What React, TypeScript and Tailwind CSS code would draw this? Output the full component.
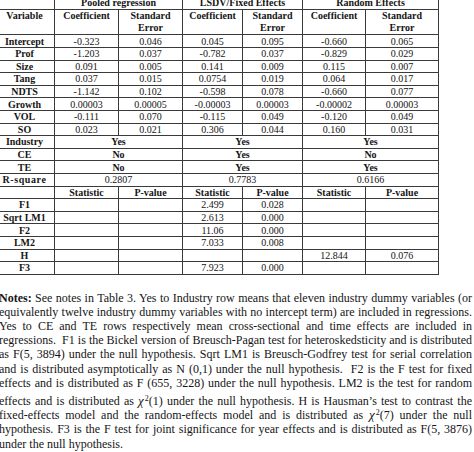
import React from "react";

type Row = [string, string, string, string, string, string, string];

const COEFS: Row[] = [
  ["Intercept", "-0.323", "0.046", "0.045", "0.095", "-0.660", "0.065"],
  ["Prof", "-1.203", "0.037", "-0.782", "0.037", "-0.829", "0.029"],
  ["Size", "0.091", "0.005", "0.141", "0.009", "0.115", "0.007"],
  ["Tang", "0.037", "0.015", "0.0754", "0.019", "0.064", "0.017"],
  ["NDTS", "-1.142", "0.102", "-0.598", "0.078", "-0.660", "0.077"],
  ["Growth", "0.00003", "0.00005", "-0.00003", "0.00003", "-0.00002", "0.00003"],
  ["VOL", "-0.111", "0.070", "-0.115", "0.049", "-0.120", "0.049"],
  ["SO", "0.023", "0.021", "0.306", "0.044", "0.160", "0.031"],
];

const DUMMIES: [string, string, string, string][] = [
  ["Industry", "Yes", "Yes", "Yes"],
  ["CE", "No", "Yes", "No"],
  ["TE", "No", "Yes", "Yes"],
];

const TESTS: Row[] = [
  ["F1", "", "", "2.499", "0.028", "", ""],
  ["Sqrt LM1", "", "", "2.613", "0.000", "", ""],
  ["F2", "", "", "11.06", "0.000", "", ""],
  ["LM2", "", "", "7.033", "0.008", "", ""],
  ["H", "", "", "", "", "12.844", "0.076"],
  ["F3", "", "", "7.923", "0.000", "", ""],
];

const td = "border border-[#3a3a3a] p-0 text-center align-middle h-[12.6px] leading-[11px]";
const hd = `${td} font-bold`;

const Chi = ({ n }: { n: string }) => (
  <span className="whitespace-nowrap">
    <i className="text-[13px]">χ</i>
    <sup className="ml-[1px] text-[8px] leading-none">2</sup>({n})
  </span>
);

// justified line of the notes paragraph
const Line = ({ children, last }: { children: React.ReactNode; last?: boolean }) => (
  <div className={`h-[14.2px] whitespace-nowrap ${last ? "text-left" : "text-justify [text-align-last:justify]"}`}>
    {children}
  </div>
);

export default function App() {
  return (
    <div className="w-[474px] h-[452px] overflow-hidden bg-white text-[#151515] font-['Liberation_Serif',serif]">
      <table className="-ml-[6px] -mt-[4px] border-collapse table-fixed text-[10px]">
        <colgroup>
          <col className="w-[60px]" />
          <col className="w-[64px]" />
          <col className="w-[64px]" />
          <col className="w-[60px]" />
          <col className="w-[60px]" />
          <col className="w-[63px]" />
          <col className="w-[73px]" />
        </colgroup>
        <tbody>
          <tr>
            <td className={td}></td>
            <td colSpan={2} className={hd}>Pooled regression</td>
            <td colSpan={2} className={hd}>LSDV/Fixed Effects</td>
            <td colSpan={2} className={hd}>Random Effects</td>
          </tr>
          <tr>
            <td className={`${hd} !align-top h-[25px] leading-[12.4px]`}>Variable</td>
            {[0, 1, 2].map((i) => (
              <React.Fragment key={i}>
                <td className={`${hd} !align-top h-[25px] leading-[12.4px]`}>Coefficient</td>
                <td className={`${hd} !align-top h-[25px] leading-[12.4px]`}>
                  Standard
                  <br />
                  Error
                </td>
              </React.Fragment>
            ))}
          </tr>
          {COEFS.map((r) => (
            <tr key={r[0]}>
              <td className={hd}>{r[0]}</td>
              {r.slice(1).map((v, i) => (
                <td key={i} className={td}>{v}</td>
              ))}
            </tr>
          ))}
          {DUMMIES.map((r) => (
            <tr key={r[0]}>
              <td className={hd}>{r[0]}</td>
              <td colSpan={2} className={hd}>{r[1]}</td>
              <td colSpan={2} className={hd}>{r[2]}</td>
              <td colSpan={2} className={hd}>{r[3]}</td>
            </tr>
          ))}
          <tr>
            <td className={`${hd} tracking-[0.6px]`}>R-square</td>
            <td colSpan={2} className={td}>0.2807</td>
            <td colSpan={2} className={td}>0.7783</td>
            <td colSpan={2} className={td}>0.6166</td>
          </tr>
          <tr>
            <td className={td}></td>
            {[0, 1, 2].map((i) => (
              <React.Fragment key={i}>
                <td className={hd}>Statistic</td>
                <td className={hd}>P-value</td>
              </React.Fragment>
            ))}
          </tr>
          {TESTS.map((r) => (
            <tr key={r[0]}>
              <td className={hd}>{r[0]}</td>
              {r.slice(1).map((v, i) => (
                <td key={i} className={td}>{v}</td>
              ))}
            </tr>
          ))}
        </tbody>
      </table>

      <div className="mt-[16px] -ml-[1px] w-[473px] text-[12px] leading-[14.2px]">
        <Line><b>Notes:</b> See notes in Table 3. Yes to Industry row means that eleven industry dummy variables (or</Line>
        <Line>equivalently twelve industry dummy variables with no intercept term) are included in regressions.</Line>
        <Line>Yes to CE and TE rows respectively mean cross-sectional and time effects are included in</Line>
        <Line>regressions. &nbsp;F1 is the Bickel version of Breusch-Pagan test for heteroskedsticity and is distributed</Line>
        <Line>as F(5, 3894) under the null hypothesis. Sqrt LM1 is Breusch-Godfrey test for serial correlation</Line>
        <Line>and is distributed asymptotically as N (0,1) under the null hypothesis. &nbsp;F2 is the F test for fixed</Line>
        <Line>effects and is distributed as F (655, 3228) under the null hypothesis. LM2 is the test for random</Line>
        <div className="h-[4px]" />
        <Line>effects and is distributed as <Chi n="1" /> under the null hypothesis. H is Hausman’s test to contrast the</Line>
        <Line>fixed-effects model and the random-effects model and is distributed as <Chi n="7" /> under the null</Line>
        <Line>hypothesis. F3 is the F test for joint significance for year effects and is distributed as F(5, 3876)</Line>
        <Line last>under the null hypothesis.</Line>
      </div>
    </div>
  );
}
